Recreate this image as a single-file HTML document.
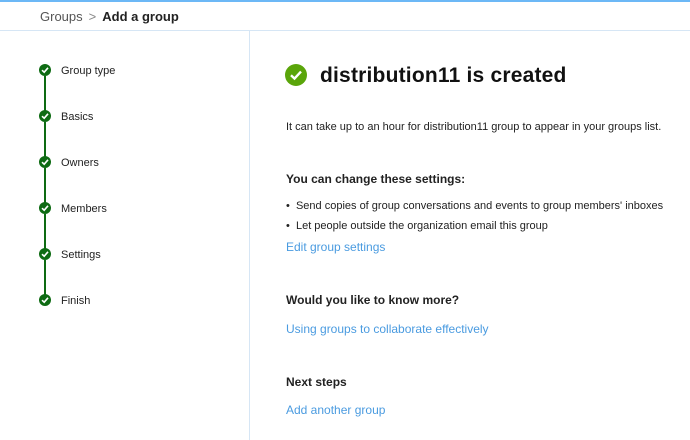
<!DOCTYPE html>
<html><head><style>
body{margin:0;width:690px;height:440px;background:#fff;font-family:"Liberation Sans",sans-serif;color:#222;position:relative;overflow:hidden}
.top{position:absolute;left:0;top:0;width:690px;height:2px;background:#6cb8f6}
.hdr{position:absolute;left:0;top:30px;width:690px;height:1px;background:#d6e6f5}
.bc{position:absolute;left:40px;top:9px;font-size:13px}
.bc .g{color:#555}.bc .s{color:#888;margin:0 6px}.bc b{color:#222}
.vd{position:absolute;left:249px;top:31px;width:1px;height:409px;background:#d6e6f5}
.step{position:absolute;left:39px;width:12px;height:12px;border-radius:50%;background:#0e6b13}
.step svg{position:absolute;left:2px;top:2px}
.ln{position:absolute;left:44px;width:2px;background:#0e6b13}
.lbl{position:absolute;left:61px;font-size:11px;color:#222}
.t{position:absolute;font-size:11px;color:#222;white-space:nowrap}
h1{position:absolute;left:320px;top:64px;margin:0;font-size:21px;font-weight:bold;color:#111;letter-spacing:0.2px}
.b{font-weight:bold;font-size:12px}
.a{color:#4a9be0;font-size:12px}
</style></head><body>
<div class="top"></div>
<div class="bc"><span class="g">Groups</span><span class="s">&gt;</span><b>Add a group</b></div>
<div class="hdr"></div>
<div class="vd"></div>

<div class="ln" style="top:76px;height:40px"></div>
<div class="ln" style="top:122px;height:40px"></div>
<div class="ln" style="top:168px;height:40px"></div>
<div class="ln" style="top:214px;height:40px"></div>
<div class="ln" style="top:260px;height:40px"></div>

<div class="step" style="top:64px"><svg width="8" height="8" viewBox="0 0 8 8"><path d="M1 4.2L3.2 6.2 7 1.8" stroke="#fff" stroke-width="1.6" fill="none"/></svg></div>
<div class="step" style="top:110px"><svg width="8" height="8" viewBox="0 0 8 8"><path d="M1 4.2L3.2 6.2 7 1.8" stroke="#fff" stroke-width="1.6" fill="none"/></svg></div>
<div class="step" style="top:156px"><svg width="8" height="8" viewBox="0 0 8 8"><path d="M1 4.2L3.2 6.2 7 1.8" stroke="#fff" stroke-width="1.6" fill="none"/></svg></div>
<div class="step" style="top:202px"><svg width="8" height="8" viewBox="0 0 8 8"><path d="M1 4.2L3.2 6.2 7 1.8" stroke="#fff" stroke-width="1.6" fill="none"/></svg></div>
<div class="step" style="top:248px"><svg width="8" height="8" viewBox="0 0 8 8"><path d="M1 4.2L3.2 6.2 7 1.8" stroke="#fff" stroke-width="1.6" fill="none"/></svg></div>
<div class="step" style="top:294px"><svg width="8" height="8" viewBox="0 0 8 8"><path d="M1 4.2L3.2 6.2 7 1.8" stroke="#fff" stroke-width="1.6" fill="none"/></svg></div>

<div class="lbl" style="top:65px">Group type</div>
<div class="lbl" style="top:111px">Basics</div>
<div class="lbl" style="top:157px">Owners</div>
<div class="lbl" style="top:203px">Members</div>
<div class="lbl" style="top:249px">Settings</div>
<div class="lbl" style="top:295px">Finish</div>

<svg style="position:absolute;left:285px;top:64px" width="22" height="22" viewBox="0 0 22 22"><circle cx="11" cy="11" r="11" fill="#5aa50a"/><path d="M6 11.3L9.5 14.6 16 7.6" stroke="#fff" stroke-width="2.4" fill="none"/></svg>
<h1>distribution11 is created</h1>

<div class="t" style="left:286px;top:121px">It can take up to an hour for distribution11 group to appear in your groups list.</div>
<div class="t b" style="left:286px;top:172px">You can change these settings:</div>
<div class="t" style="left:286px;top:200px">•&nbsp;&nbsp;Send copies of group conversations and events to group members' inboxes</div>
<div class="t" style="left:286px;top:220px">•&nbsp;&nbsp;Let people outside the organization email this group</div>
<div class="t a" style="left:286px;top:240px">Edit group settings</div>
<div class="t b" style="left:286px;top:293px">Would you like to know more?</div>
<div class="t a" style="left:286px;top:322px">Using groups to collaborate effectively</div>
<div class="t b" style="left:286px;top:375px">Next steps</div>
<div class="t a" style="left:286px;top:403px">Add another group</div>
</body></html>
